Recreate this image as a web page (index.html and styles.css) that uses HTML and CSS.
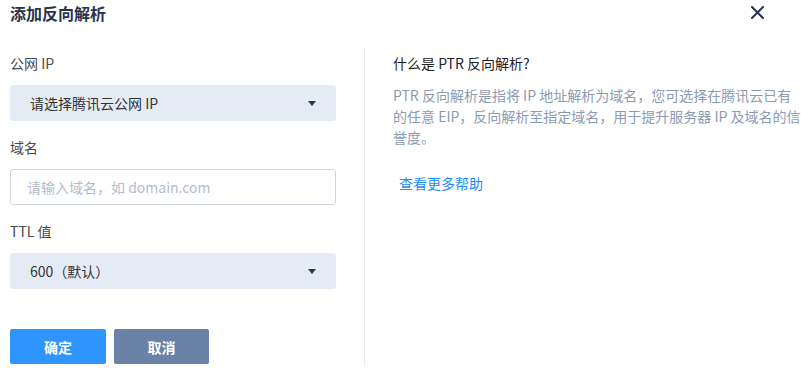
FILE: index.html
```html
<!DOCTYPE html>
<html lang="zh-CN">
<head>
<meta charset="utf-8">
<title>添加反向解析</title>
<link rel="stylesheet" href="styles.css">
</head>
<body>
<div class="dialog">
  <div class="dialog-header">
    <h2 class="dialog-title">添加反向解析</h2>
    <button class="close-btn" aria-label="关闭">
      <svg width="13" height="13" viewBox="0 0 13 13"><path d="M1 1 L12 12 M12 1 L1 12" stroke="#29334d" stroke-width="2" stroke-linecap="square" fill="none"/></svg>
    </button>
  </div>
  <div class="dialog-body">
    <div class="form-col">
      <div class="form-item">
        <div class="form-label">公网 IP</div>
        <div class="select">
          <span class="select-text">请选择腾讯云公网 IP</span>
          <span class="caret"></span>
        </div>
      </div>
      <div class="form-item">
        <div class="form-label">域名</div>
        <input class="text-input" type="text" placeholder="请输入域名，如 domain.com">
      </div>
      <div class="form-item">
        <div class="form-label">TTL 值</div>
        <div class="select">
          <span class="select-text">600（默认）</span>
          <span class="caret"></span>
        </div>
      </div>
      <div class="actions">
        <button class="btn btn-primary">确定</button>
        <button class="btn btn-cancel">取消</button>
      </div>
    </div>
    <div class="help-col">
      <div class="help-title">什么是 PTR 反向解析?</div>
      <p class="help-desc">PTR 反向解析是指将 IP 地址解析为域名，您可选择在腾讯云已有的任意 EIP，反向解析至指定域名，用于提升服务器 IP 及域名的信誉度。</p>
      <a class="help-link" href="#">查看更多帮助</a>
    </div>
  </div>
</div>
</body>
</html>
```
FILE: styles.css
```css
* { box-sizing: border-box; }
html, body { margin: 0; padding: 0; background: #fff; }
body {
  font-family: "Noto Sans CJK SC", "Noto Sans", sans-serif;
  font-size: 14px;
  color: #333;
  width: 801px;
  height: 373px;
  overflow: hidden;
}
.dialog-header {
  display: flex;
  justify-content: space-between;
  align-items: flex-start;
  height: 48px;
  padding: 0 37px 0 10px;
}
.dialog-title {
  margin: 0;
  font-size: 16px;
  line-height: 26px;
  font-weight: 700;
  color: #29334d;
}
.close-btn {
  border: 0;
  background: none;
  padding: 0;
  margin-top: 6px;
  width: 13px;
  height: 13px;
  display: block;
  cursor: pointer;
}
.close-btn svg { display: block; }
.dialog-body {
  display: flex;
  height: 317px;
}
.form-col {
  width: 326px;
  margin-left: 10px;
  margin-right: 28px;
  padding-top: 5px;
}
.form-item { margin-bottom: 16px; }
.form-label {
  line-height: 20px;
  height: 20px;
  margin-bottom: 12px;
  color: #4a4a4a;
}
.select {
  height: 36px;
  background: #e5ebf5;
  border-radius: 3px;
  display: flex;
  align-items: center;
  justify-content: space-between;
  padding: 0 20px 0 20px;
  color: #333;
}
.caret {
  width: 0;
  height: 0;
  border-left: 4px solid transparent;
  border-right: 4px solid transparent;
  border-top: 5px solid #29334d;
}
.text-input {
  display: block;
  width: 100%;
  height: 36px;
  border: 1px solid #cfd6e0;
  border-radius: 3px;
  padding: 0 16px;
  font-family: inherit;
  font-size: 14px;
  color: #333;
  outline: none;
}
.text-input::placeholder { color: #b3bdcc; }
.actions {
  display: flex;
  gap: 8px;
  margin-top: 40px;
}
.btn {
  width: 96px;
  height: 35px;
  border: 0;
  border-radius: 2px;
  color: #fff;
  font-family: inherit;
  font-size: 14px;
  font-weight: 700;
  cursor: pointer;
}
.btn-primary { background: #2f95fe; }
.btn-cancel { width: 95px; background: #6a82a5; }
.help-col {
  flex: 1;
  border-left: 1px solid #e6e9ee;
  padding: 5px 0 0 28px;
}
.help-title {
  line-height: 21px;
  color: #222;
  margin-bottom: 11px;
}
.help-desc {
  margin: 0;
  width: 408px;
  line-height: 21px;
  color: #8c9bb4;
}
.help-link {
  display: inline-block;
  margin-top: 25px;
  margin-left: 6px;
  line-height: 21px;
  color: #1f8cf6;
  text-decoration: none;
}
```
